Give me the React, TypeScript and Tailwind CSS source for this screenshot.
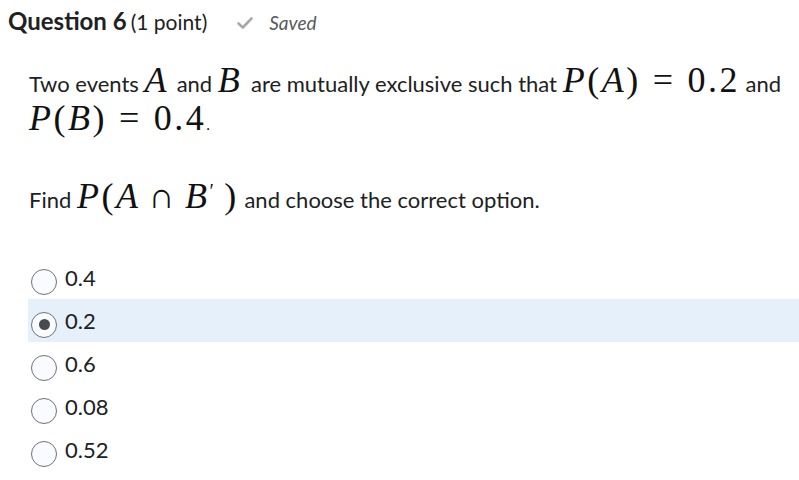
import React from "react";

const lato = { fontFamily: "Lato, 'Noto Sans', sans-serif" } as const;

function MI({ children, className = "" }: { children: React.ReactNode; className?: string }) {
  return <span className={`italic ${className}`}>{children}</span>;
}

function Math({ children, className = "" }: { children: React.ReactNode; className?: string }) {
  return (
    <span
      className={`text-[36px] leading-[0] tracking-[2.5px] text-[#111] ${className}`}
      style={{ fontFamily: "'Liberation Serif', 'Times New Roman', serif" }}
    >
      {children}
    </span>
  );
}

function Eq() {
  return <span className="mx-[12px]">=</span>;
}

function Radio({ checked }: { checked?: boolean }) {
  return (
    <span className="mt-[8px] flex h-[26px] w-[26px] shrink-0 items-center justify-center rounded-full border border-[#6e7376] bg-[#f9fbff]">
      {checked && <span className="h-[11px] w-[11px] rounded-full bg-[#494c4e]" />}
    </span>
  );
}

const options = ["0.4", "0.2", "0.6", "0.08", "0.52"];

export default function App() {
  return (
    <div className="h-[480px] w-[799px] overflow-hidden bg-white text-[#202122]" style={lato}>
      <div className="flex items-baseline pl-[8px] pt-[4px]">
        <span className="text-[24px] font-bold leading-[34px] text-[#202122]">Question 6</span>
        <span className="ml-[4px] text-[21px] leading-[34px] text-[#202122]">(1 point)</span>
        <span className="ml-[30px] flex items-baseline text-[19px] italic text-[#565a5c]">
          <svg width="16" height="12" viewBox="0 0 16 12" className="mr-[16px] self-center">
            <path d="M1.5 6.5 L5.8 10.5 L14.5 1.5" fill="none" stroke="#a5a9ac" strokeWidth="2.6" strokeLinecap="round" strokeLinejoin="round" />
          </svg>
          Saved
        </span>
      </div>

      <div className="pl-[29px] pr-[4px]">
        <p className="mt-[26px] text-[22px] leading-[38px]">
          Two events <Math><MI className="mr-[2px]">A</MI></Math> and{" "}
          <Math><MI className="mr-[3px]">B</MI></Math> are mutually exclusive such that{" "}
          <Math>
            <MI>P</MI>(<MI>A</MI>)<Eq />0.2
          </Math>{" "}
          and{" "}
          <Math>
            <MI>P</MI>(<MI>B</MI>)<Eq />0.4
          </Math>
          <span className="text-[16px]">.</span>
        </p>

        <p className="mt-[38px] text-[22px] leading-[38px]">
          Find{" "}
          <Math>
            <MI>P</MI>(<MI className="mr-[2px]">A</MI>
            <span className="mx-[6px]">∩</span>
            <MI className="ml-[2px]">B</MI>
            <sup className="mr-[8px] text-[20px] not-italic">′</sup>)
          </Math>{" "}
          and choose the correct option.
        </p>
      </div>

      <div className="mt-[37px] flex flex-col pl-[28px]">
        {options.map((o, i) => (
          <div
            key={o}
            className={`flex h-[43px] items-center gap-[8px] pl-[3px] ${i === 1 ? "bg-[#e6f0fa]" : ""}`}
          >
            <Radio checked={i === 1} />
            <span className="text-[22px] text-[#202122]">{o}</span>
          </div>
        ))}
      </div>
    </div>
  );
}
